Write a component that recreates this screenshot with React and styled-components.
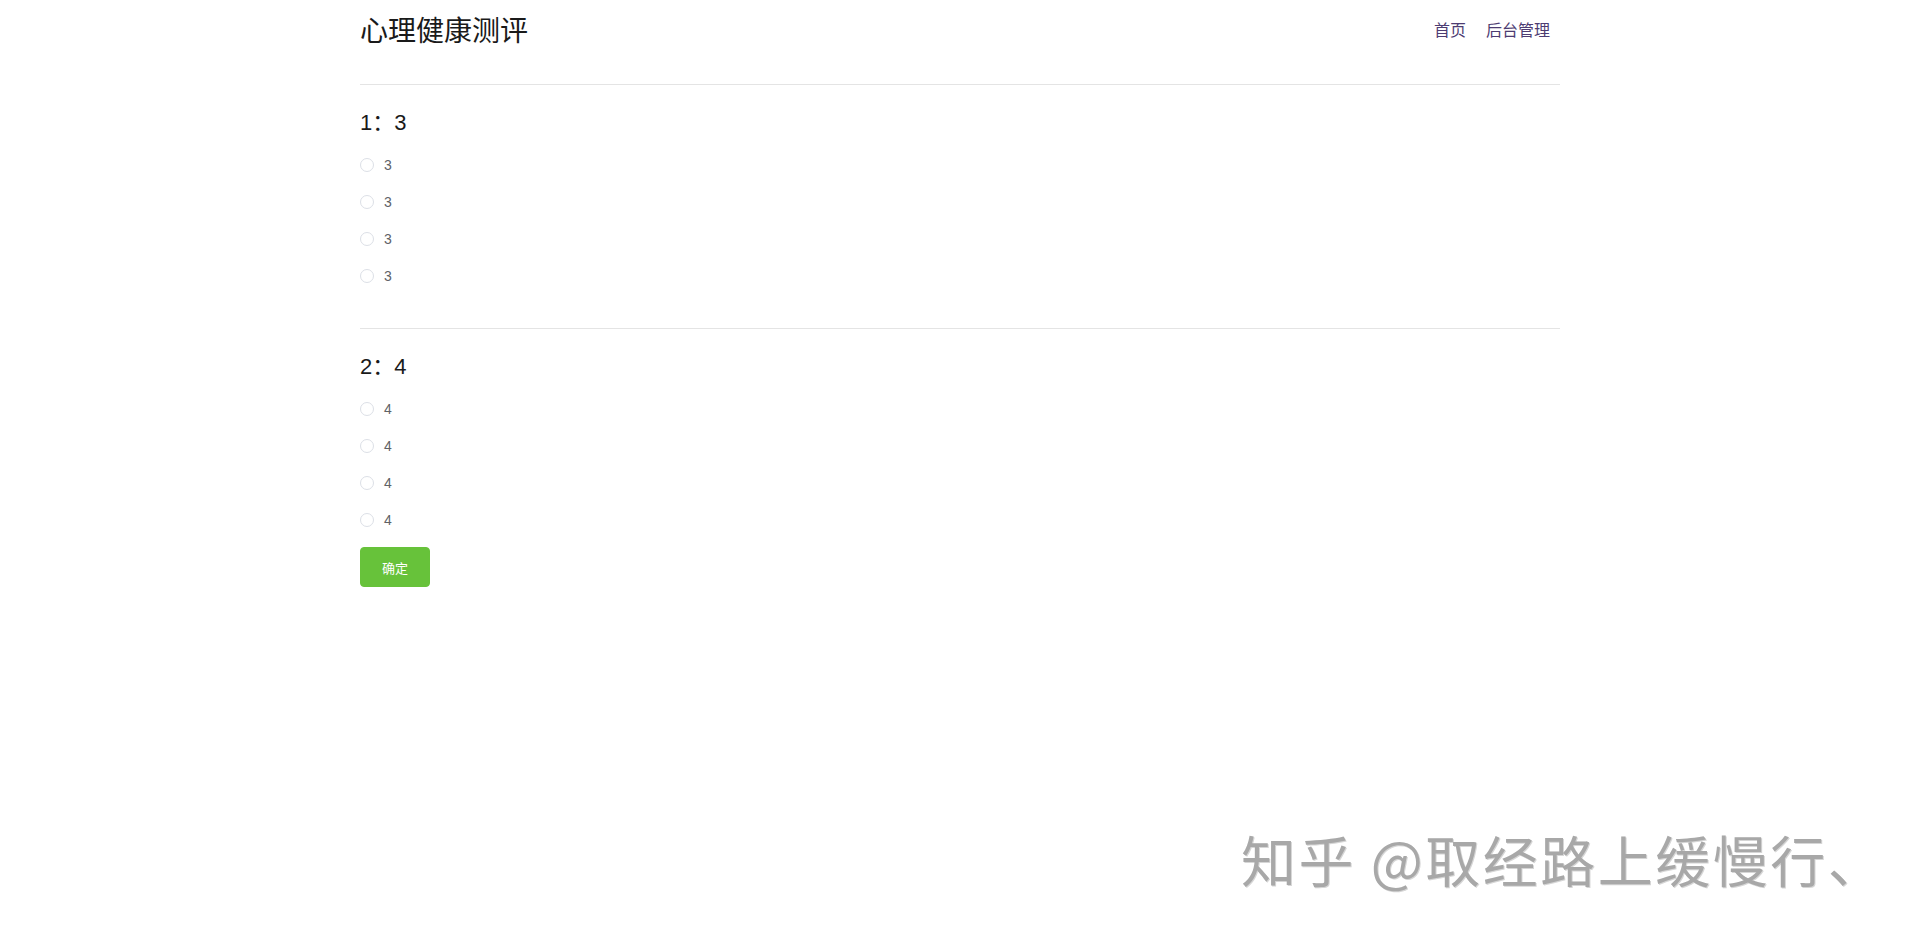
import React from "react";
import styled, { createGlobalStyle } from "styled-components";

const GlobalStyle = createGlobalStyle`
  html, body { margin: 0; padding: 0; background: #fff; }
  body { font-family: "Liberation Sans", "Noto Sans CJK SC", sans-serif; }
`;

const Page = styled.div`
  position: relative;
  min-height: 937px;
  overflow: hidden;
`;

const Container = styled.div`
  width: 1200px;
  margin: 0 auto;
`;

const Header = styled.header`
  height: 58px;
  display: flex;
  align-items: center;
  justify-content: space-between;
  margin-bottom: 26px;
`;

const Title = styled.h1`
  margin: 0;
  font-size: 28px;
  font-weight: 400;
  color: #1a1a1a;
  font-family: "Noto Sans CJK SC", sans-serif;
  line-height: 36px;
`;

const Nav = styled.nav`
  display: flex;
  gap: 20px;
  margin-right: 10px;
`;

const NavLink = styled.a`
  font-size: 16px;
  color: #4d3c72;
  text-decoration: none;
  font-family: "Noto Sans CJK SC", sans-serif;
  line-height: 22px;
`;

const Section = styled.section`
  border-top: 1px solid #e4e4e4;
  padding-top: 23px;
  & + & {
    margin-top: 34px;
  }
`;

const Question = styled.h3`
  margin: 0;
  font-size: 22px;
  font-weight: 400;
  line-height: 30px;
  color: #1a1a1a;
`;

const Options = styled.div`
  margin-top: 8px;
  display: flex;
  flex-direction: column;
`;

const Option = styled.label`
  height: 37px;
  display: flex;
  align-items: center;
  gap: 10px;
  cursor: pointer;
`;

const Circle = styled.span`
  width: 12px;
  height: 12px;
  border: 1px solid #dcdfe6;
  border-radius: 50%;
  background: #fff;
  box-sizing: content-box;
`;

const Label = styled.span`
  font-size: 14px;
  color: #606266;
`;

const Button = styled.button`
  margin-top: 9px;
  width: 70px;
  height: 40px;
  padding: 0;
  border: 1px solid #67c23a;
  background: #67c23a;
  border-radius: 4px;
  color: #fff;
  font-size: 13px;
  font-family: "Noto Sans CJK SC", sans-serif;
  cursor: pointer;
`;

const Watermark = styled.div`
  position: absolute;
  left: 1241px;
  top: 831px;
  font-family: "Noto Sans CJK SC", sans-serif;
  font-size: 55px;
  font-weight: 400;
  letter-spacing: 2.5px;
  color: #a8a8a8;
  text-shadow: 1px 1px 0 #d6d6d6;
  white-space: pre;
  line-height: 1;
`;

const questions = [
  { no: 1, title: "3", options: ["3", "3", "3", "3"] },
  { no: 2, title: "4", options: ["4", "4", "4", "4"] },
];

export default function App() {
  return (
    <Page>
      <GlobalStyle />
      <Container>
        <Header>
          <Title>心理健康测评</Title>
          <Nav>
            <NavLink href="#">首页</NavLink>
            <NavLink href="#">后台管理</NavLink>
          </Nav>
        </Header>
        {questions.map((q) => (
          <Section key={q.no}>
            <Question>{q.no}：{q.title}</Question>
            <Options>
              {q.options.map((o, i) => (
                <Option key={i}>
                  <Circle />
                  <Label>{o}</Label>
                </Option>
              ))}
            </Options>
          </Section>
        ))}
        <Button>确定</Button>
      </Container>
      <Watermark>知乎 @取经路上缓慢行、</Watermark>
    </Page>
  );
}
